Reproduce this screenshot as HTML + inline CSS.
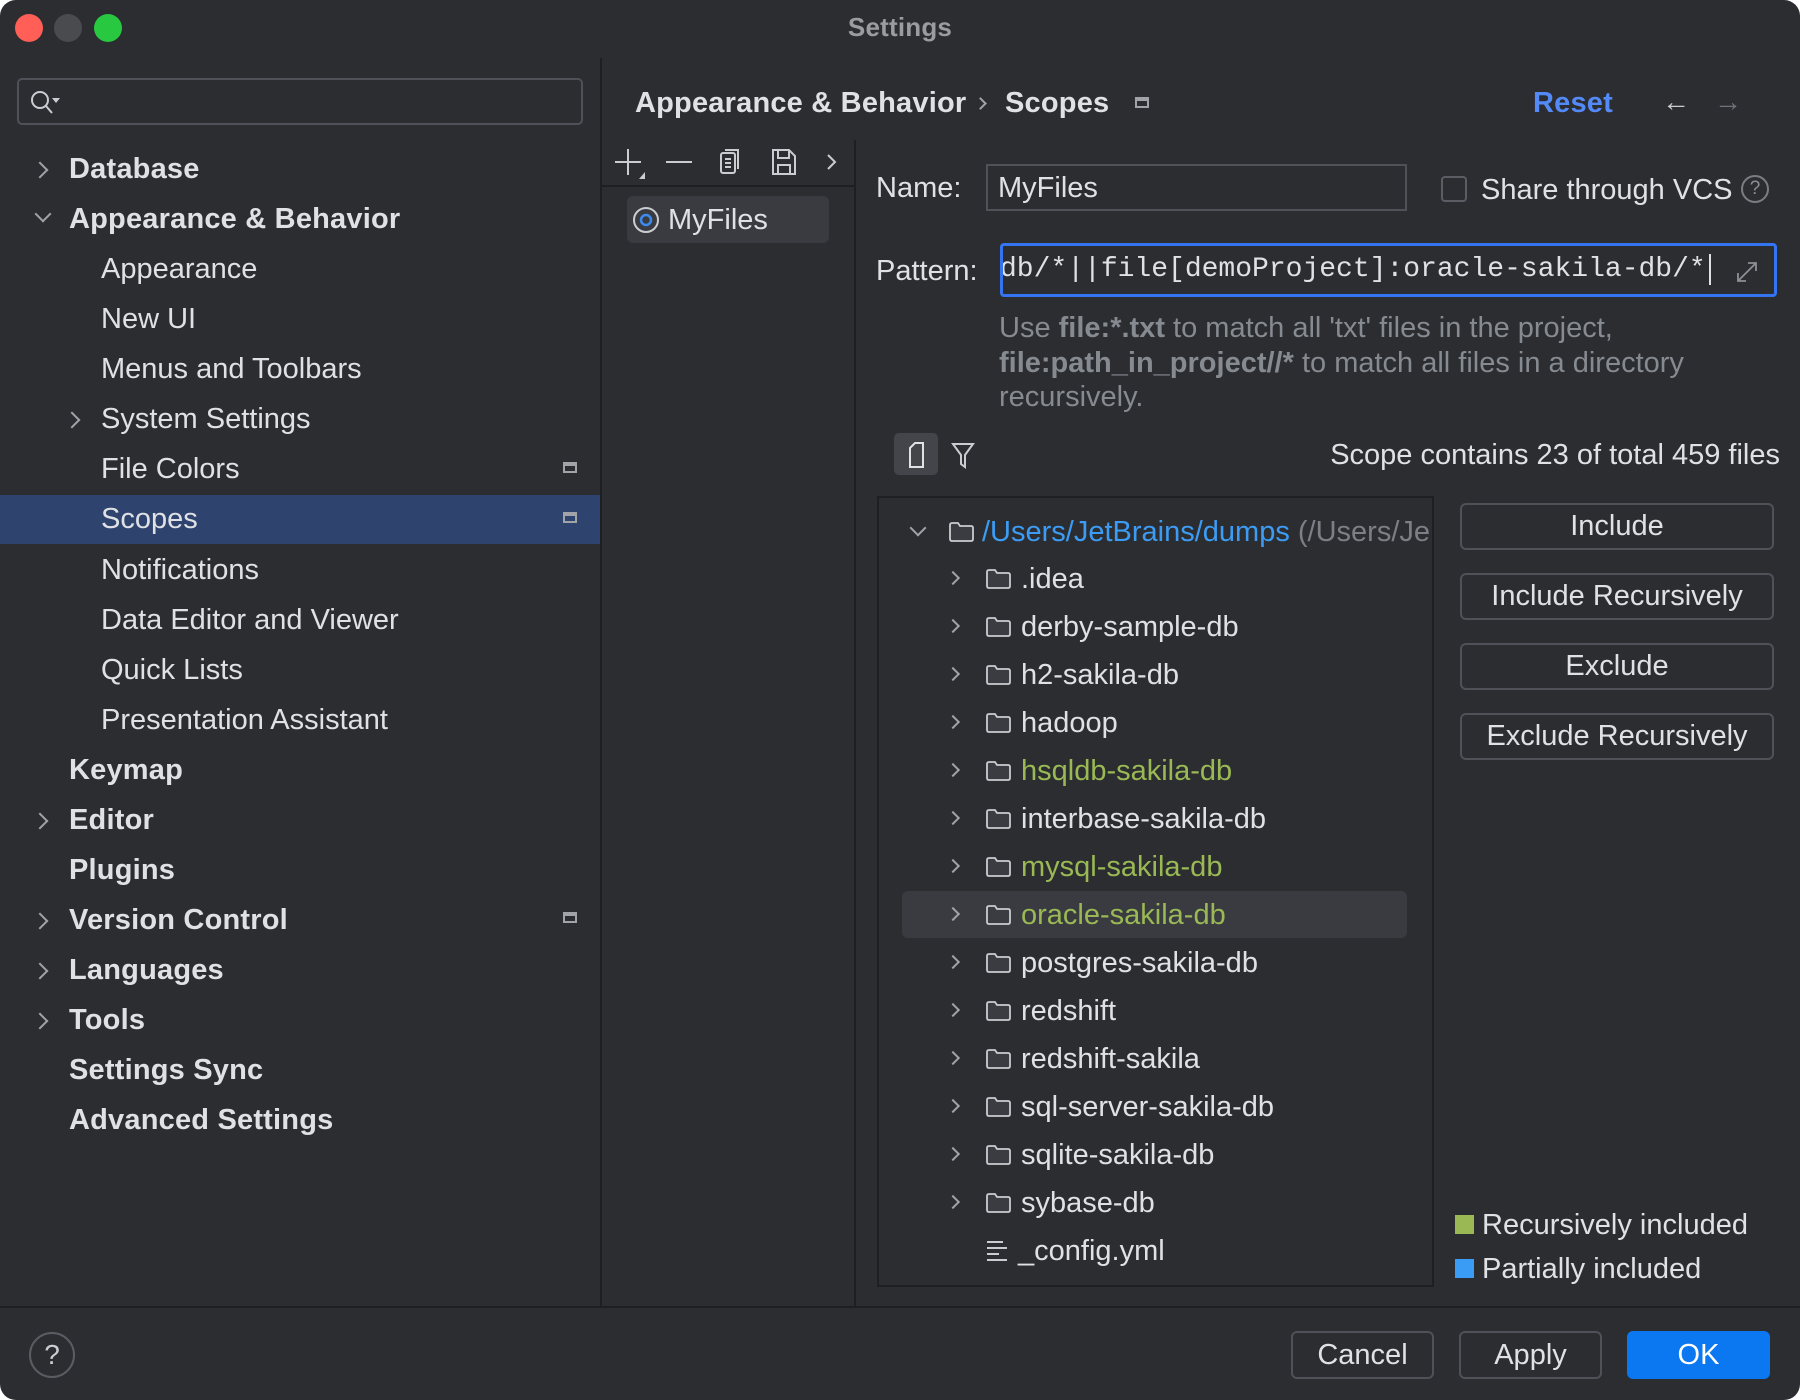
<!DOCTYPE html>
<html><head><meta charset="utf-8"><style>
*{box-sizing:border-box;margin:0;padding:0}
body{width:1800px;height:1400px;background:#fff;font-family:"Liberation Sans",sans-serif;color:#dfe1e5;overflow:hidden;position:relative}
.win{position:absolute;left:0;top:0;width:1800px;height:1400px;background:#2b2d30;border-radius:16px;overflow:hidden}
.a{position:absolute;white-space:nowrap}
.t{font-size:29px}
.b{font-weight:bold;letter-spacing:0.2px}
.dot{position:absolute;width:28px;height:28px;border-radius:50%;top:14px}
.chev{position:absolute;width:12px;height:12px;border-right:2px solid #a0a3a8;border-bottom:2px solid #a0a3a8}
.r{transform:rotate(-45deg)}
.d{transform:rotate(45deg)}
.sb{position:absolute;width:14px;height:11px;border:2px solid #a0a3a8;border-top-width:4px}
.btn{position:absolute;border:2px solid #4e5157;border-radius:6px;text-align:center;font-size:29px;color:#dfe1e5;background:#2b2d30}
.fold{position:absolute;width:25px;height:20px}
</style></head><body><div class="win">
<div class="dot" style="left:15px;background:#ff5f57"></div>
<div class="dot" style="left:54px;background:#4a4b4e"></div>
<div class="dot" style="left:94px;background:#28c840"></div>
<div class="a b" style="left:0;width:1800px;text-align:center;top:12px;font-size:26px;color:#9a9ca0">Settings</div>

<div class="a" style="left:600px;top:58px;width:2px;height:1249px;background:#1e1f22"></div>
<div class="a" style="left:17px;top:78px;width:566px;height:47px;border:2px solid #4e5157;border-radius:5px"></div>
<svg class="a" style="left:28px;top:88px" width="36" height="30"><circle cx="12" cy="12" r="8" stroke="#c9ccd1" stroke-width="2" fill="none"/><line x1="18" y1="18" x2="24" y2="25" stroke="#c9ccd1" stroke-width="2"/><path d="M24 10 L32 10 L28 15Z" fill="#c9ccd1"/></svg>

<div class="a" style="left:0;top:495px;width:600px;height:49px;background:#2e436e"></div>
<div class="chev r" style="left:34px;top:164px"></div>
<div class="a t b" style="left:69px;top:153px">Database</div>
<div class="chev d" style="left:37px;top:208px"></div>
<div class="a t b" style="left:69px;top:203px">Appearance &amp; Behavior</div>
<div class="a t" style="left:101px;top:253px">Appearance</div>
<div class="a t" style="left:101px;top:303px">New UI</div>
<div class="a t" style="left:101px;top:353px">Menus and Toolbars</div>
<div class="chev r" style="left:66px;top:414px"></div>
<div class="a t" style="left:101px;top:403px">System Settings</div>
<div class="a t" style="left:101px;top:453px">File Colors</div>
<div class="sb" style="left:563px;top:462px"></div>
<div class="a t" style="left:101px;top:503px">Scopes</div>
<div class="sb" style="left:563px;top:512px"></div>
<div class="a t" style="left:101px;top:554px">Notifications</div>
<div class="a t" style="left:101px;top:604px">Data Editor and Viewer</div>
<div class="a t" style="left:101px;top:654px">Quick Lists</div>
<div class="a t" style="left:101px;top:704px">Presentation Assistant</div>
<div class="a t b" style="left:69px;top:754px">Keymap</div>
<div class="chev r" style="left:34px;top:815px"></div>
<div class="a t b" style="left:69px;top:804px">Editor</div>
<div class="a t b" style="left:69px;top:854px">Plugins</div>
<div class="chev r" style="left:34px;top:915px"></div>
<div class="a t b" style="left:69px;top:904px">Version Control</div>
<div class="sb" style="left:563px;top:912px"></div>
<div class="chev r" style="left:34px;top:965px"></div>
<div class="a t b" style="left:69px;top:954px">Languages</div>
<div class="chev r" style="left:34px;top:1015px"></div>
<div class="a t b" style="left:69px;top:1004px">Tools</div>
<div class="a t b" style="left:69px;top:1054px">Settings Sync</div>
<div class="a t b" style="left:69px;top:1104px">Advanced Settings</div>

<div class="a b" style="left:635px;top:87px;font-size:29px">Appearance &amp; Behavior</div>
<div class="chev r" style="left:976px;top:99px;width:9px;height:9px"></div>
<div class="a b" style="left:1005px;top:87px;font-size:29px">Scopes</div>
<div class="sb" style="left:1135px;top:97px"></div>
<div class="a b" style="left:1533px;top:87px;font-size:29px;color:#548af7">Reset</div>
<div class="a" style="left:1662px;top:86px;font-size:28px;color:#c9ccd1">←</div>
<div class="a" style="left:1714px;top:86px;font-size:28px;color:#6f737a">→</div>

<div class="a" style="left:854px;top:140px;width:2px;height:1167px;background:#1e1f22"></div>
<div class="a" style="left:602px;top:185px;width:252px;height:2px;background:#1e1f22"></div>
<svg class="a" style="left:612px;top:145px" width="240" height="36"><path d="M16 4V30M3 17H29" stroke="#c9ccd1" stroke-width="2"/><path d="M33 34V27L27 34Z" fill="#c9ccd1"/><path d="M54 17H80" stroke="#c9ccd1" stroke-width="2"/><rect x="109" y="8" width="14" height="20" rx="2" stroke="#c9ccd1" stroke-width="2" fill="none"/><path d="M113 5H126V24" stroke="#c9ccd1" stroke-width="2" fill="none"/><path d="M113 14h6M113 18h6M113 22h6" stroke="#c9ccd1" stroke-width="2"/><path d="M161 5H177L183 11V29H161Z" stroke="#c9ccd1" stroke-width="2" fill="none"/><path d="M166 5V13H177V5M166 29V20H178V29" stroke="#c9ccd1" stroke-width="2" fill="none"/><path d="M216 10L223 17L216 24" stroke="#c9ccd1" stroke-width="2" fill="none"/></svg>
<div class="a" style="left:627px;top:196px;width:202px;height:47px;background:#393b40;border-radius:6px"></div>
<svg class="a" style="left:632px;top:206px" width="28" height="28"><circle cx="14" cy="14" r="12" stroke="#c9ccd1" stroke-width="2" fill="none"/><circle cx="14" cy="14" r="5" stroke="#3c8cf0" stroke-width="2.5" fill="none"/></svg>
<div class="a t" style="left:668px;top:204px">MyFiles</div>

<div class="a t" style="left:876px;top:172px">Name:</div>
<div class="a" style="left:986px;top:164px;width:421px;height:47px;border:2px solid #4e5157"></div>
<div class="a t" style="left:998px;top:172px">MyFiles</div>
<div class="a" style="left:1441px;top:176px;width:26px;height:26px;border:2px solid #5a5d63;border-radius:4px"></div>
<div class="a t" style="left:1481px;top:174px">Share through VCS</div>
<div class="a" style="left:1741px;top:175px;width:28px;height:28px;border:2px solid #7a7d82;border-radius:50%;font-size:19px;text-align:center;line-height:24px;color:#8c8f94">?</div>
<div class="a t" style="left:876px;top:255px">Pattern:</div>
<div class="a" style="left:1000px;top:243px;width:777px;height:54px;border:3px solid #3574f0;border-radius:4px;overflow:hidden">
<div class="a" style="left:-3px;top:8px;font-family:'Liberation Mono',monospace;font-size:28px;letter-spacing:0px;color:#dfe1e5">db/*||file[demoProject]:oracle-sakila-db/*<span style="border-left:2px solid #dfe1e5;margin-left:3px"></span></div>
<svg class="a" style="left:727px;top:9px" width="32" height="32"><path d="M8 26L26 8M18 8H26V16M8 18V26H16" stroke="#8c8f94" stroke-width="1.8" fill="none"/></svg>
</div>
<div class="a" style="left:999px;top:311px;font-size:29px;line-height:34.5px;color:#868a91;white-space:normal;width:760px">Use <b>file:*.txt</b> to match all 'txt' files in the project, <b>file:path_in_project//*</b> to match all files in a directory recursively.</div>

<div class="a" style="left:894px;top:433px;width:44px;height:42px;background:#43454a;border-radius:5px"></div>
<svg class="a" style="left:903px;top:440px" width="80" height="30"><path d="M7 8L12 3H20V27H7Z" stroke="#dfe1e5" stroke-width="2" fill="none"/><path d="M50 4H70L62 15V27L58 24V15Z" stroke="#c9ccd1" stroke-width="2" fill="none"/></svg>
<div class="a t" style="right:20px;top:439px">Scope contains 23 of total 459 files</div>

<div class="a" style="left:877px;top:496px;width:557px;height:791px;border:2px solid #1e1f22;overflow:hidden">
<div class="a" style="left:23px;top:393px;width:505px;height:47px;background:#393b40;border-radius:6px"></div>
</div>
<div id="tree"></div>

<div class="btn" style="left:1460px;top:503px;width:314px;height:47px;line-height:43px">Include</div>
<div class="btn" style="left:1460px;top:573px;width:314px;height:47px;line-height:43px">Include Recursively</div>
<div class="btn" style="left:1460px;top:643px;width:314px;height:47px;line-height:43px">Exclude</div>
<div class="btn" style="left:1460px;top:713px;width:314px;height:47px;line-height:43px">Exclude Recursively</div>

<div class="a" style="left:1455px;top:1215px;width:19px;height:19px;background:#9ab955"></div>
<div class="a t" style="left:1482px;top:1209px">Recursively included</div>
<div class="a" style="left:1455px;top:1259px;width:19px;height:19px;background:#3b9cf5"></div>
<div class="a t" style="left:1482px;top:1253px">Partially included</div>

<div class="a" style="left:0;top:1306px;width:1800px;height:2px;background:#1e1f22"></div>
<div class="a" style="left:29px;top:1332px;width:46px;height:46px;border:2px solid #5a5d63;border-radius:50%;font-size:28px;text-align:center;line-height:42px;color:#c9ccd1">?</div>
<div class="btn" style="left:1291px;top:1331px;width:143px;height:48px;line-height:44px">Cancel</div>
<div class="btn" style="left:1459px;top:1331px;width:143px;height:48px;line-height:44px">Apply</div>
<div class="btn" style="left:1627px;top:1331px;width:143px;height:48px;line-height:44px;background:#0b77f0;border-color:#0b77f0;color:#fff">OK</div>
</div>
<script>
var rows=[[".idea",0],["derby-sample-db",0],["h2-sakila-db",0],["hadoop",0],["hsqldb-sakila-db",1],["interbase-sakila-db",0],["mysql-sakila-db",1],["oracle-sakila-db",1],["postgres-sakila-db",0],["redshift",0],["redshift-sakila",0],["sql-server-sakila-db",0],["sqlite-sakila-db",0],["sybase-db",0]];
var h='';var fold='<svg class="fold" style="left:XPX;top:YPX" viewBox="0 0 25 20"><path d="M1 3Q1 1 3 1H9L11 4H22Q24 4 24 6V17Q24 19 22 19H3Q1 19 1 17Z" fill="#3a3c41" stroke="#c9ccd1" stroke-width="1.8"/></svg>';
h+='<div class="chev d" style="left:912px;top:522px"></div>'+fold.replace('X',949).replace('Y',522)+'<div class="a t" style="left:982px;top:516px;width:448px;overflow:hidden"><span style="color:#3c9cf5">/Users/JetBrains/dumps</span> <span style="color:#7c7f85">(/Users/JetBrains/dumps)</span></div>';
for(var i=0;i<rows.length;i++){var y=565+i*48;
h+='<div class="chev r" style="left:948px;top:'+(y+8)+'px;width:10px;height:10px"></div>'+fold.replace('X',986).replace('Y',y+4)+'<div class="a t" style="left:1021px;top:'+(y-2)+'px;color:'+(rows[i][1]?'#9ab955':'#dfe1e5')+'">'+rows[i][0]+'</div>';}
var y=565+14*48;
h+='<svg class="a" style="left:985px;top:'+(y+2)+'px" width="26" height="24"><path d="M2 3H18M2 9H22M2 15H14M2 21H22" stroke="#c9ccd1" stroke-width="2"/></svg><div class="a t" style="left:1018px;top:'+(y-2)+'px">_config.yml</div>';
document.getElementById('tree').outerHTML=h;
</script>
</body></html>
